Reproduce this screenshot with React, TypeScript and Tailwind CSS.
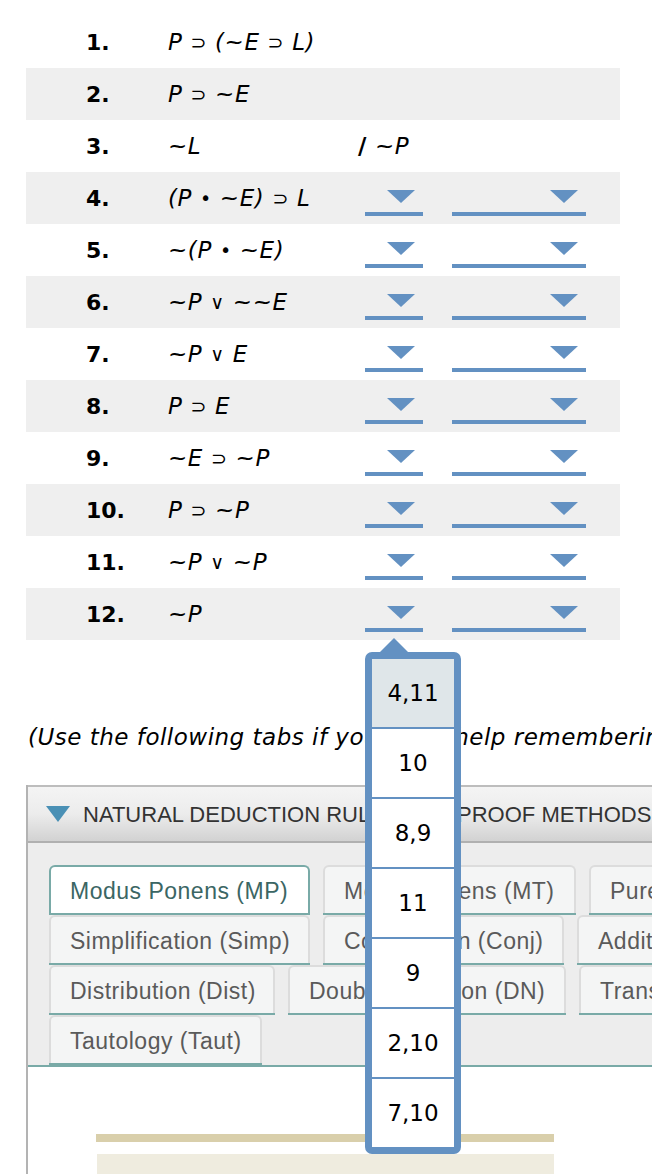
import React from "react";

const BLUE = "#6391c2";

function Sym({ c }: { c: string }) {
  return <span className="not-italic text-[19px] mx-[8px] align-[1px]">{c}</span>;
}

function F({ s }: { s: string }) {
  const parts: React.ReactNode[] = [];
  let buf = "";
  let k = 0;
  for (const ch of s) {
    if (ch === "⊃" || ch === "∨" || ch === "•") {
      if (buf) parts.push(<span key={k++}>{buf}</span>);
      buf = "";
      parts.push(<Sym key={k++} c={ch} />);
    } else if (ch === " ") {
      // spacing handled by Sym margins
    } else {
      buf += ch;
    }
  }
  if (buf) parts.push(<span key={k++}>{buf}</span>);
  return <span className="italic whitespace-nowrap text-[23px] tracking-[0.6px]">{parts}</span>;
}

function Dropdown({ wide }: { wide?: boolean }) {
  return (
    <div className={wide ? "flex flex-col w-[134px]" : "flex flex-col w-[58px]"}>
      <div className="flex justify-end pr-[8px] h-[13px]">
        <svg width="28" height="13" viewBox="0 0 28 13">
          <polygon points="0,0 28,0 14,13" fill={BLUE} />
        </svg>
      </div>
      <div className="h-[9px]" />
      <div className="h-[4px] bg-[#6391c2]" />
    </div>
  );
}

const rows: { n: string; f: string; concl?: boolean; dd?: boolean }[] = [
  { n: "1.", f: "P ⊃ (~E ⊃ L)" },
  { n: "2.", f: "P ⊃ ~E" },
  { n: "3.", f: "~L", concl: true },
  { n: "4.", f: "(P • ~E) ⊃ L", dd: true },
  { n: "5.", f: "~(P • ~E)", dd: true },
  { n: "6.", f: "~P ∨ ~~E", dd: true },
  { n: "7.", f: "~P ∨ E", dd: true },
  { n: "8.", f: "P ⊃ E", dd: true },
  { n: "9.", f: "~E ⊃ ~P", dd: true },
  { n: "10.", f: "P ⊃ ~P", dd: true },
  { n: "11.", f: "~P ∨ ~P", dd: true },
  { n: "12.", f: "~P", dd: true },
];

function Tab({ label, w, active }: { label: string; w: string; active?: boolean }) {
  return (
    <div
      className={
        active
          ? `${w} shrink-0 h-[50px] flex items-center pl-[19px] bg-white border-2 border-b-0 border-[#79aaa7] rounded-t-[6px] text-[#3b6664] relative`
          : `${w} shrink-0 h-[50px] flex items-center pl-[19px] bg-[#f4f5f5] border-2 border-b-0 border-[#dcdcdc] rounded-t-[6px] text-[#5a5a5a] relative`
      }
    >
      <span className="whitespace-nowrap">{label}</span>
      <div className="absolute left-[-2px] right-[-2px] bottom-0 h-[2px] bg-[#79aaa7]" />
    </div>
  );
}

export default function App() {
  return (
    <div
      className="relative w-[652px] h-[1174px] overflow-hidden bg-white text-black"
      style={{ fontFamily: "Verdana, 'DejaVu Sans', sans-serif" }}
    >
      <div className="pt-[16px] pl-[26px]">
        <div className="w-[594px]">
          {rows.map((r, i) => (
            <div
              key={i}
              className={
                i % 2 === 1
                  ? "h-[52px] flex items-center bg-[#efefef] text-[22px]"
                  : "h-[52px] flex items-center text-[22px]"
              }
            >
              <div className="w-[142px] pl-[60px] font-bold">{r.n}</div>
              <div className="w-[190px]">
                <F s={r.f} />
              </div>
              {r.concl && (
                <div className="whitespace-nowrap text-[23px] tracking-[0.6px]">
                  <span className="font-bold">/</span>{" "}
                  <span className="italic">~P</span>
                </div>
              )}
              {r.dd && (
                <div className="flex gap-[29px] ml-[7px] self-start mt-[18px]">
                  <Dropdown />
                  <Dropdown wide />
                </div>
              )}
            </div>
          ))}
        </div>
      </div>

      <p className="mt-[82px] ml-[28px] text-[23px] tracking-[0.5px] italic whitespace-nowrap leading-[30px]">
        (Use the following tabs if you need help remembering the rules.)
      </p>

      <div className="mt-[33px] ml-[26px] w-[900px] border-l-2 border-[#b3b3b3]">
        <div className="h-[58px] flex items-center border-t-2 border-b-2 border-[#bdbdbd] border-b-[#b0b0b0] bg-gradient-to-b from-[#f4f4f4] via-[#ececec] to-[#d2d2d2]">
          <svg className="ml-[18px]" width="24" height="16" viewBox="0 0 24 16">
            <polygon points="0,0 24,0 12,16" fill="#4a90b5" />
          </svg>
          <span
            className="ml-[13px] text-[22px] text-[#333] whitespace-nowrap"
            style={{ fontFamily: "Arial, 'Liberation Sans', sans-serif" }}
          >
            NATURAL DEDUCTION RULES AND PROOF METHODS
          </span>
        </div>
        <div
          className="bg-[#ededed] pt-[22px] pl-[21px] text-[23px] tracking-[0.5px]"
          style={{ fontFamily: "Helvetica, Arial, 'Liberation Sans', sans-serif" }}
        >
          <div className="flex gap-[13px]">
            <Tab label="Modus Ponens (MP)" w="w-[261px]" active />
            <Tab label="Modus Tollens (MT)" w="w-[253px]" />
            <Tab label="Pure Hypothetical Syllogism (HS)" w="w-[360px]" />
          </div>
          <div className="flex gap-[13px]">
            <Tab label="Simplification (Simp)" w="w-[261px]" />
            <Tab label="Conjunction (Conj)" w="w-[241px]" />
            <Tab label="Addition (Add)" w="w-[200px]" />
          </div>
          <div className="flex gap-[13px]">
            <Tab label="Distribution (Dist)" w="w-[226px]" />
            <Tab label="Double Negation (DN)" w="w-[278px]" />
            <Tab label="Transposition (Trans)" w="w-[260px]" />
          </div>
          <div className="flex gap-[13px]">
            <Tab label="Tautology (Taut)" w="w-[213px]" />
          </div>
        </div>
        <div className="h-[2px] bg-[#79aaa7]" />
        <div className="h-[200px] bg-white pt-[67px] pl-[68px]">
          <div className="w-[458px] h-[8px] bg-[#d9cfab]" />
          <div className="w-[457px] h-[40px] mt-[12px] ml-[1px] bg-[#efecdf]" />
        </div>
      </div>

      {/* open dropdown popup */}
      <div className="absolute left-[365px] top-[638px] w-[96px]">
        <div className="flex pl-[15px] h-[14px]">
          <svg width="28" height="14" viewBox="0 0 28 14">
            <polygon points="0,14 14,0 28,14" fill={BLUE} />
          </svg>
        </div>
        <div className="border-[7px] border-[#6391c2] rounded-[7px] bg-white text-[23px]">
          {["4,11", "10", "8,9", "11", "9", "2,10", "7,10"].map((v, i) => (
            <div
              key={i}
              className={
                i === 0
                  ? "h-[68px] flex items-center justify-center bg-[#dfe6e9]"
                  : "h-[70px] flex items-center justify-center border-t-2 border-[#6391c2]"
              }
            >
              {v}
            </div>
          ))}
        </div>
      </div>
    </div>
  );
}
